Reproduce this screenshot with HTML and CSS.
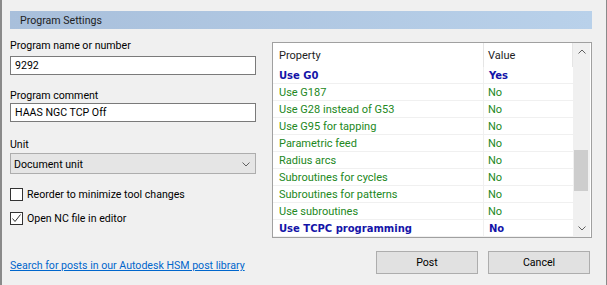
FILE: index.html
```html
<!DOCTYPE html>
<html>
<head>
<meta charset="utf-8">
<link rel="stylesheet" href="styles.css">
</head>
<body>
<div class="dialog">
  <div class="titlebar">Program Settings</div>
  <div class="main">
    <div class="left">
      <div class="label">Program name or number</div>
      <div class="field f1">9292</div>
      <div class="label l2">Program comment</div>
      <div class="field f2">HAAS NGC TCP Off</div>
      <div class="label l3">Unit</div>
      <div class="select"><span>Document unit</span><svg class="chev" width="8" height="5" viewBox="0 0 8 5"><polyline points="0.5,0.5 4,4 7.5,0.5" fill="none" stroke="#606060" stroke-width="1"/></svg></div>
      <div class="check c1"><span class="box"></span><span class="ctext">Reorder to minimize tool changes</span></div>
      <div class="check c2"><span class="box"><svg width="11" height="11" viewBox="0 0 11 11"><polyline points="1.5,5.5 4,8.5 9.5,1.5" fill="none" stroke="#333" stroke-width="1"/></svg></span><span class="ctext">Open NC file in editor</span></div>
    </div>
    <div class="table">
      <div class="list">
        <div class="head"><div class="cell prop">Property</div><div class="cell val">Value</div></div>
        <div class="row blue"><div class="cell prop">Use G0</div><div class="cell val">Yes</div></div>
        <div class="row green"><div class="cell prop">Use G187</div><div class="cell val">No</div></div>
        <div class="row green"><div class="cell prop">Use G28 instead of G53</div><div class="cell val">No</div></div>
        <div class="row green"><div class="cell prop">Use G95 for tapping</div><div class="cell val">No</div></div>
        <div class="row green"><div class="cell prop">Parametric feed</div><div class="cell val">No</div></div>
        <div class="row green"><div class="cell prop">Radius arcs</div><div class="cell val">No</div></div>
        <div class="row green"><div class="cell prop">Subroutines for cycles</div><div class="cell val">No</div></div>
        <div class="row green"><div class="cell prop">Subroutines for patterns</div><div class="cell val">No</div></div>
        <div class="row green"><div class="cell prop">Use subroutines</div><div class="cell val">No</div></div>
        <div class="row blue"><div class="cell prop">Use TCPC programming</div><div class="cell val">No</div></div>
      </div>
      <div class="scroll">
        <div class="sbtn"><svg width="8" height="5" viewBox="0 0 8 5"><polyline points="0.5,4.5 4,1 7.5,4.5" fill="none" stroke="#606060" stroke-width="1"/></svg></div>
        <div class="track"><div class="thumb"></div></div>
        <div class="sbtn"><svg width="8" height="5" viewBox="0 0 8 5"><polyline points="0.5,0.5 4,4 7.5,0.5" fill="none" stroke="#606060" stroke-width="1"/></svg></div>
      </div>
    </div>
  </div>
  <div class="footer">
    <a class="link" href="#">Search for posts in our Autodesk HSM post library</a>
    <div class="buttons">
      <div class="btn">Post</div>
      <div class="btn">Cancel</div>
    </div>
  </div>
</div>
</body>
</html>
```
FILE: styles.css
```css
html, body {
  margin: 0;
  background: #f0f0f0;
}
body {
  font-family: Roboto, "Liberation Sans", sans-serif;
  font-size: 10.6px;
  color: #000;
}
.dialog {
  width: 607px;
  height: 285px;
  box-sizing: border-box;
  border-left: 2px solid #8a8a8a;
  border-right: 1px solid #8a8a8a;
  padding: 11px 14px 0 8px;
  background: #f0f0f0;
}
.titlebar {
  height: 18px;
  line-height: 19px;
  padding-left: 10px;
  background: linear-gradient(to right, #a8bfdb, #b9d1ea);
  color: #1e1e1e;
}
.main {
  display: grid;
  grid-template-columns: 246px 320px;
  column-gap: 16px;
  margin-top: 9px;
  align-items: start;
}
.left {
  display: flex;
  flex-direction: column;
}
.label {
  height: 14px;
  line-height: 16px;
}
.l2 { margin-top: 13px; }
.l3 { margin-top: 15px; }
.field {
  height: 19px;
  box-sizing: border-box;
  border: 1px solid #7a7a7a;
  background: #fff;
  padding-left: 4px;
  line-height: 18px;
}
.f1 { margin-top: 4px; }
.f2 { margin-top: 1px; }
.select {
  margin-top: 2px;
  height: 21px;
  box-sizing: border-box;
  border: 1px solid #adadad;
  background: #e5e5e5;
  display: flex;
  align-items: center;
  justify-content: space-between;
  padding: 1px 5px 0 3px;
}
.check {
  display: flex;
  align-items: center;
  gap: 4px;
  height: 14px;
}
.ctext {
  padding-top: 1px;
}
.c1 { margin-top: 13px; }
.c2 { margin-top: 10px; }
.box {
  width: 13px;
  height: 13px;
  box-sizing: border-box;
  border: 1px solid #333;
  background: #fff;
  display: flex;
}
.table {
  margin-top: 4px;
  height: 196px;
  box-sizing: border-box;
  border: 1px solid #a0a0a0;
  background: #fff;
  display: flex;
  font-size: 11px;
}
.list {
  width: 300px;
}
.head {
  display: flex;
  height: 24px;
  color: #1e1e1e;
}
.cell {
  display: flex;
  align-items: center;
  box-sizing: border-box;
  white-space: nowrap;
}
.prop {
  width: 211px;
  padding-left: 6px;
}
.val {
  width: 89px;
  padding-left: 4px;
}
.head .prop, .head .val {
  border-right: 1px solid #e5e5e5;
}
.row {
  display: flex;
  height: 17px;
  box-sizing: border-box;
  border-bottom: 1px solid #f0f0f0;
}
.row .prop {
  border-right: 1px solid #f0f0f0;
}
.green { color: #228822; }
.blue {
  color: #1414a8;
  font-family: "DejaVu Sans", sans-serif;
  font-size: 10px;
  font-weight: bold;
}
.blue .val {
  padding-left: 5px;
}
.scroll {
  width: 17px;
  background: #f0f0f0;
  display: flex;
  flex-direction: column;
}
.sbtn {
  height: 17px;
  display: flex;
  align-items: center;
  justify-content: center;
}
.track {
  flex: 1;
}
.thumb {
  margin: 90px 2px 0 1px;
  height: 41px;
  background: #cdcdcd;
}
.footer {
  display: flex;
  justify-content: space-between;
  align-items: flex-start;
  margin-top: 13px;
  padding-right: 2px;
}
.link {
  margin-top: 8px;
  line-height: 14px;
  color: #0066cc;
  text-decoration: underline;
}
.buttons {
  display: flex;
  gap: 10px;
}
.btn {
  width: 102px;
  height: 23px;
  box-sizing: border-box;
  border: 1px solid #adadad;
  background: #e1e1e1;
  display: flex;
  align-items: center;
  justify-content: center;
}
```
